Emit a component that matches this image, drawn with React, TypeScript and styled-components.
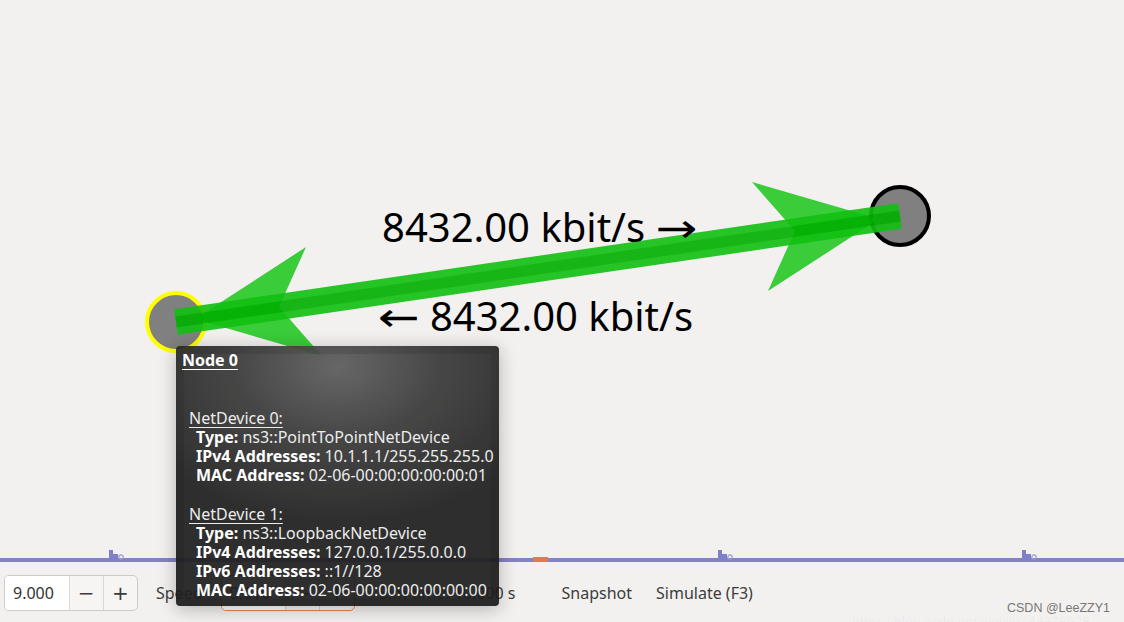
import React from "react";
import styled, { createGlobalStyle } from "styled-components";

const GlobalStyle = createGlobalStyle`
  html, body { margin: 0; padding: 0; background: #f2f1ef; overflow: hidden; }
  #root { width: 1124px; height: 622px; }
`;

const Window = styled.div`
  position: relative;
  width: 1124px;
  height: 622px;
  display: flex;
  flex-direction: column;
  background: #f2f1ef;
  font-family: "Noto Sans", "Open Sans", sans-serif;
  overflow: hidden;
`;

const Canvas = styled.div`
  position: relative;
  height: 548px;
  flex: none;
`;

const Drawing = styled.svg`
  position: absolute;
  left: 0;
  top: 0;
`;

const RateLabel = styled.div<{ $x: number; $y: number }>`
  position: absolute;
  left: ${(p) => p.$x}px;
  top: ${(p) => p.$y}px;
  font-family: "Noto Sans", "DejaVu Sans", sans-serif;
  font-size: 40px;
  line-height: 1;
  color: #000;
  white-space: nowrap;
`;

const Arrow = styled.span`
  display: inline-block;
  transform: scaleX(1.25);
  transform-origin: center;
  margin: 0 4px;
`;

const Timeline = styled.div`
  height: 18px;
  flex: none;
`;

const Toolbar = styled.div`
  flex: 1;
  display: flex;
  align-items: center;
  padding: 0 0 2px 4px;
  font-size: 16px;
  color: #3c3c3c;
`;

const SpinBox = styled.div<{ $focus?: boolean }>`
  display: flex;
  height: 36px;
  width: 134px;
  box-sizing: border-box;
  border: 1px solid ${(p) => (p.$focus ? "#e9825a" : "#cdcbc7")};
  border-radius: 5px;
  overflow: hidden;
  background: #f6f5f4;
  flex: none;
`;

const SpinField = styled.div`
  width: 65px;
  background: #ffffff;
  display: flex;
  align-items: center;
  padding-left: 8px;
  box-sizing: border-box;
  color: #333;
  font-size: 16px;
`;

const SpinButton = styled.div`
  width: 34px;
  border-left: 1px solid #dad8d4;
  display: flex;
  align-items: center;
  justify-content: center;
  font-size: 20px;
  color: #3a3a3a;
  font-family: "DejaVu Sans", sans-serif;
`;

const Label = styled.span<{ $ml?: number; $w?: number }>`
  margin-left: ${(p) => p.$ml ?? 0}px;
  ${(p) => (p.$w ? `width: ${p.$w}px; text-align: right;` : "")}
  white-space: nowrap;
  flex: none;
`;

const ToolButton = styled.span<{ $ml?: number }>`
  margin-left: ${(p) => p.$ml ?? 0}px;
  padding: 6px 0;
  white-space: nowrap;
  color: #3c3c3c;
`;

const Tooltip = styled.div`
  position: absolute;
  left: 176px;
  top: 346px;
  width: 323px;
  height: 260px;
  box-sizing: border-box;
  padding: 5px 0 0 6px;
  border-radius: 4px;
  background: radial-gradient(ellipse 70% 60% at 50% 8%, #5d5d5d 0%, #3a3a3a 45%, #202020 100%);
  box-shadow: inset 0 0 0 8px rgba(0, 0, 0, 0.12), 0 3px 18px rgba(0, 0, 0, 0.28);
  opacity: 0.93;
  color: #ececec;
  font-family: "Noto Sans", "Open Sans", sans-serif;
  font-size: 16px;
  line-height: 19.2px;
`;

const TipTitle = styled.div`
  font-weight: bold;
  color: #fff;
  text-decoration: underline;
  text-underline-offset: 3px;
  margin-bottom: 38.4px;
`;

const DeviceBlock = styled.div`
  margin-bottom: 19.2px;
`;

const DeviceTitle = styled.div`
  padding-left: 7px;
  text-decoration: underline;
  text-underline-offset: 3px;
`;

const Field = styled.div`
  padding-left: 14px;
  white-space: nowrap;
`;

const Key = styled.b`
  color: #fff;
`;

const Watermark = styled.div`
  position: absolute;
  right: 14px;
  bottom: 7px;
  font-family: "Liberation Sans", sans-serif;
  font-size: 12.5px;
  color: #777;
  text-align: right;
`;

const FaintUrl = styled.div`
  position: absolute;
  left: 852px;
  top: 614px;
  font-family: "Liberation Sans", sans-serif;
  font-size: 14px;
  color: rgba(0, 0, 0, 0.04);
  white-space: nowrap;
`;

const devices = [
  {
    name: "NetDevice 0:",
    fields: [
      ["Type:", "ns3::PointToPointNetDevice"],
      ["IPv4 Addresses:", "10.1.1.1/255.255.255.0"],
      ["MAC Address:", "02-06-00:00:00:00:00:01"],
    ],
  },
  {
    name: "NetDevice 1:",
    fields: [
      ["Type:", "ns3::LoopbackNetDevice"],
      ["IPv4 Addresses:", "127.0.0.1/255.0.0.0"],
      ["IPv6 Addresses:", "::1//128"],
      ["MAC Address:", "02-06-00:00:00:00:00:00"],
    ],
  },
];

const Tick: React.FC<{ x: number }> = ({ x }) => (
  <g fill="#8080c8">
    <rect x={x} y={2} width={4} height={10} />
    <rect x={x + 4} y={6} width={5} height={6} />
    <circle cx={x + 12} cy={9} r={2.2} fill="none" stroke="#9a9ad4" strokeWidth={1.2} />
  </g>
);

export default function App() {
  return (
    <>
      <GlobalStyle />
      <Window>
        <Canvas>
          <Drawing width={1124} height={548} viewBox="0 0 1124 548">
            <circle cx={176} cy={322} r={29} fill="#808080" stroke="#ffff00" strokeWidth={4} />
            <circle cx={900} cy={216} r={29} fill="#808080" stroke="#000" strokeWidth={4} />
            <g fill="#00c000" opacity={0.76}>
              <polygon points="879,219 752,182 795,231 768,291" />
              <polygon points="195,319 306,247 279,307 322,356" />
            </g>
            <g opacity={0.9}>
              <line x1={176} y1={322} x2={900} y2={216} stroke="#12c012" strokeWidth={26} />
              <line x1={176} y1={322} x2={900} y2={216} stroke="#00b000" strokeWidth={11} />
            </g>
          </Drawing>
          <RateLabel $x={382} $y={207}>
            8432.00 kbit/s <Arrow>→</Arrow>
          </RateLabel>
          <RateLabel $x={378} $y={296}>
            <Arrow>←</Arrow> 8432.00 kbit/s
          </RateLabel>
        </Canvas>
        <Timeline>
          <svg width={1124} height={18} viewBox="0 0 1124 18">
            <rect x={0} y={10} width={1124} height={4} fill="#8282c6" />
            <Tick x={109} />
            <Tick x={718} />
            <Tick x={1022} />
            <rect x={533} y={9} width={15} height={5} fill="#e07a56" />
          </svg>
        </Timeline>
        <Toolbar>
          <SpinBox>
            <SpinField>9.000</SpinField>
            <SpinButton>−</SpinButton>
            <SpinButton>+</SpinButton>
          </SpinBox>
          <Label $ml={18}>Speed</Label>
          <SpinBox $focus style={{ marginLeft: 18 }}>
            <SpinField>0.010</SpinField>
            <SpinButton>−</SpinButton>
            <SpinButton>+</SpinButton>
          </SpinBox>
          <Label $w={161}>Sim time: 10.000 s</Label>
          <ToolButton $ml={46}>Snapshot</ToolButton>
          <ToolButton $ml={24}>Simulate (F3)</ToolButton>
        </Toolbar>
        <Tooltip>
          <TipTitle>Node 0</TipTitle>
          {devices.map((d) => (
            <DeviceBlock key={d.name}>
              <DeviceTitle>{d.name}</DeviceTitle>
              {d.fields.map(([k, v]) => (
                <Field key={k}>
                  <Key>{k}</Key> {v}
                </Field>
              ))}
            </DeviceBlock>
          ))}
        </Tooltip>
        <Watermark>CSDN @LeeZZY1</Watermark>
        <FaintUrl>https://blog.csdn.net/weixin_44878925</FaintUrl>
      </Window>
    </>
  );
}
